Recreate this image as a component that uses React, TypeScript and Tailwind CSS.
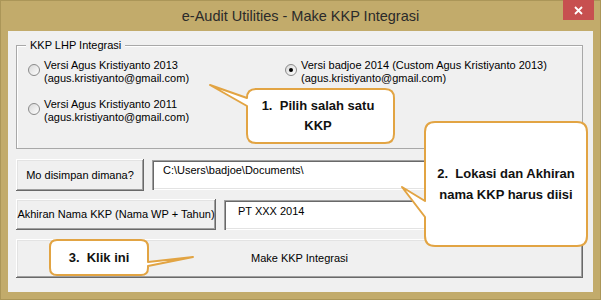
import React from "react";

// callout shapes, in client-area coordinates
function leftTail(x1: number, y1: number, x2: number, y2: number, r: number, ya: number, yb: number, tx: number, ty: number) {
  return `M${x1 + r},${y1} H${x2 - r} Q${x2},${y1} ${x2},${y1 + r} V${y2 - r} Q${x2},${y2} ${x2 - r},${y2} H${x1 + r} Q${x1},${y2} ${x1},${y2 - r} V${yb} L${tx},${ty} L${x1},${ya} V${y1 + r} Q${x1},${y1} ${x1 + r},${y1} Z`;
}

function rightTail(x1: number, y1: number, x2: number, y2: number, r: number, ya: number, yb: number, tx: number, ty: number) {
  return `M${x1 + r},${y1} H${x2 - r} Q${x2},${y1} ${x2},${y1 + r} V${ya} L${tx},${ty} L${x2},${yb} V${y2 - r} Q${x2},${y2} ${x2 - r},${y2} H${x1 + r} Q${x1},${y2} ${x1},${y2 - r} V${y1 + r} Q${x1},${y1} ${x1 + r},${y1} Z`;
}

const callouts = [
  leftTail(239, 58, 386, 112, 9, 67, 75, 202, 54),
  leftTail(417, 91, 579, 215, 10, 170, 186, 394, 156),
  rightTail(42, 209, 140, 244, 7, 231, 235, 185, 226),
];

const btn =
  "bg-[#f0f0f0] shadow-[inset_-1px_-1px_#696969,inset_1px_1px_#ffffff,inset_-2px_-2px_#a0a0a0,inset_2px_2px_#e3e3e3] flex items-center justify-center text-[11px] text-black";
const field =
  "bg-white shadow-[inset_1px_1px_#a0a0a0,inset_2px_2px_#696969,inset_-1px_-1px_#ffffff,inset_-2px_-2px_#e3e3e3] text-[11px] text-black leading-[13px]";

function Radio({ checked, lines }: { checked?: boolean; lines: string[] }) {
  return (
    <div className="flex items-start gap-[4px]">
      <div className="mt-[5px] w-[12px] h-[12px] rounded-full border border-[#8a8a8a] bg-gradient-to-br from-[#d8d8d8] to-white flex items-center justify-center shrink-0">
        {checked && <div className="w-[4px] h-[4px] rounded-full bg-black" />}
      </div>
      <div className="text-[11px] leading-[13px] text-black">
        {lines.map((l) => (
          <div key={l}>{l}</div>
        ))}
      </div>
    </div>
  );
}

export default function App() {
  return (
    <div
      className="w-[601px] h-[300px] bg-[#c2ab6b] border border-[#ab9658] flex flex-col"
      style={{ fontFamily: '"Liberation Sans", Arial, sans-serif' }}
    >
      {/* title bar */}
      <div className="h-[30px] grid grid-cols-[1fr_auto_1fr]">
        <div />
        <div className="flex items-center text-[14.5px] text-[#2a2a2a] pt-[2px]">e-Audit Utilities - Make KKP Integrasi</div>
        <div className="flex justify-end items-start pr-[6px]">
          <div className="w-[31px] h-[20px] bg-[#c75050] flex items-center justify-center -mt-[1px]">
            <svg width="9" height="9" viewBox="0 0 9 9">
              <path d="M1 1 L8 8 M8 1 L1 8" stroke="white" strokeWidth="1.8" />
            </svg>
          </div>
        </div>
      </div>

      {/* client area */}
      <div className="mx-[7px] h-[261px] bg-[#f0f0f0] relative px-[8px] pt-[14px] flex flex-col">
        {/* group box */}
        <div className="relative h-[104px] w-[567px] border border-[#a8a8a8] shadow-[inset_1px_1px_#ffffff] pt-[13px] pl-[11px]">
          <div className="absolute -top-[7px] left-[9px] px-[4px] bg-[#f0f0f0] text-[11px] leading-[13px] text-black">KKP LHP Integrasi</div>
          <div className="grid grid-cols-[257px_1fr] gap-y-[13px]">
            <Radio lines={["Versi Agus Kristiyanto 2013", "(agus.kristiyanto@gmail.com)"]} />
            <Radio checked lines={["Versi badjoe 2014 (Custom Agus Kristiyanto 2013)", "(agus.kristiyanto@gmail.com)"]} />
            <Radio lines={["Versi Agus Kristiyanto 2011", "(agus.kristiyanto@gmail.com)"]} />
          </div>
        </div>

        <div className="mt-[10px] flex items-center gap-[8px] h-[32px]">
          <div className={`${btn} w-[128px] h-[32px]`}>Mo disimpan dimana?</div>
          <div className={`${field} w-[431px] h-[30px] pl-[11px] pt-[4px]`}>C:\Users\badjoe\Documents\</div>
        </div>

        <div className="mt-[8px] flex items-center gap-[8px] h-[31px]">
          <div className={`${btn} w-[200px] h-[31px]`}>Akhiran Nama KKP (Nama WP + Tahun)</div>
          <div className={`${field} w-[359px] h-[30px] pl-[14px] pt-[5px]`}>PT XXX 2014</div>
        </div>

        <div className={`${btn} mt-[9px] w-[567px] h-[39px]`}>Make KKP Integrasi</div>

        {/* callouts */}
        <svg className="absolute inset-0 pointer-events-none" width="585" height="261" viewBox="0 0 585 261">
          {callouts.map((d, i) => (
            <path key={i} d={d} fill="white" stroke="#e2a443" strokeWidth="2" strokeLinejoin="round" />
          ))}
        </svg>
        <div className="absolute left-[239px] top-[58px] w-[147px] h-[54px] flex flex-col items-center justify-center pr-[5px] text-[13px] font-bold leading-[20px] text-[#111]">
          <div>1.&nbsp; Pilih salah satu</div>
          <div>KKP</div>
        </div>
        <div className="absolute left-[417px] top-[91px] w-[162px] h-[124px] flex flex-col items-center justify-center text-[13px] font-bold leading-[21px] text-[#111]">
          <div>2.&nbsp; Lokasi dan Akhiran</div>
          <div>nama KKP harus diisi</div>
        </div>
        <div className="absolute left-[42px] top-[209px] w-[98px] h-[35px] flex items-center justify-center text-[13px] font-bold text-[#111]">
          3.&nbsp; Klik ini
        </div>
      </div>
    </div>
  );
}
